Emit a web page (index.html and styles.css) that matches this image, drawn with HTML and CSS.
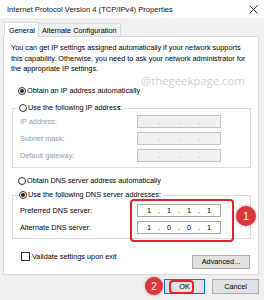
FILE: index.html
```html
<!DOCTYPE html>
<html>
<head>
<meta charset="utf-8">
<link rel="stylesheet" href="styles.css">
</head>
<body>
<div class="titlebar">
  <span class="title">Internet Protocol Version 4 (TCP/IPv4) Properties</span>
  <svg class="close" width="9" height="9" viewBox="0 0 9 9"><path d="M0.5 0.5L8.5 8.5M8.5 0.5L0.5 8.5" stroke="#222" stroke-width="0.9" fill="none"/></svg>
</div>
<div class="tabs">
  <div class="tab active">General</div>
  <div class="tab">Alternate Configuration</div>
</div>
<div class="panel">
  <p class="intro">You can get IP settings assigned automatically if your network supports this capability. Otherwise, you need to ask your network administrator for the appropriate IP settings.</p>
  <div class="watermark">@thegeekpage.com</div>
  <div class="radio-row first"><span class="radio checked"></span><span>Obtain an IP address automatically</span></div>
  <div class="group ip">
    <div class="legend"><span class="radio"></span><span>Use the following IP address:</span></div>
    <div class="field-row"><span class="label disabled">IP address:</span><div class="ipbox disabled"><i></i><i>.</i><i></i><i>.</i><i></i><i>.</i><i></i></div></div>
    <div class="field-row"><span class="label disabled">Subnet mask:</span><div class="ipbox disabled"><i></i><i>.</i><i></i><i>.</i><i></i><i>.</i><i></i></div></div>
    <div class="field-row"><span class="label disabled">Default gateway:</span><div class="ipbox disabled"><i></i><i>.</i><i></i><i>.</i><i></i><i>.</i><i></i></div></div>
  </div>
  <div class="radio-row dns-auto"><span class="radio"></span><span>Obtain DNS server address automatically</span></div>
  <div class="group dns">
    <div class="legend"><span class="radio checked"></span><span>Use the following DNS server addresses:</span></div>
    <div class="field-row"><span class="label">Preferred DNS server:</span><div class="ipbox"><i>1</i><i>.</i><i>1</i><i>.</i><i>1</i><i>.</i><i>1</i></div></div>
    <div class="field-row"><span class="label">Alternate DNS server:</span><div class="ipbox"><i>1</i><i>.</i><i>0</i><i>.</i><i>0</i><i>.</i><i>1</i></div></div>
    <div class="highlight dns-hl"></div>
    <div class="badge badge-1">1</div>
  </div>
  <div class="bottom-row">
    <div class="check-row"><span class="checkbox"></span><span>Validate settings upon exit</span></div>
    <div class="btn advanced">Advanced...</div>
  </div>
</div>
<div class="footer">
  <div class="btn ok">OK<div class="highlight ok-hl"></div><div class="badge badge-2">2</div></div>
  <div class="btn cancel">Cancel</div>
</div>
</body>
</html>
```
FILE: styles.css
```css
* { box-sizing: border-box; }
html, body { margin: 0; padding: 0; }
body {
  width: 264px;
  height: 300px;
  overflow: hidden;
  background: #f0f0f0;
  font-family: "Liberation Sans", Arial, sans-serif;
  font-size: 7.3px;
  color: #000;
}
.titlebar {
  height: 18px;
  background: #fff;
  display: flex;
  align-items: center;
  justify-content: space-between;
  padding: 0 6px 0 7px;
}
.title { font-size: 7.6px; color: #111; }
.close { display: block; }
.tabs {
  display: flex;
  align-items: flex-end;
  padding-left: 4px;
  height: 18px;
}
.tab {
  height: 13px;
  border: 1px solid #d9d9d9;
  border-bottom: none;
  background: #f0f0f0;
  padding: 0 3px;
  display: flex;
  align-items: center;
  margin-left: -1px;
}
.tab.active {
  height: 15px;
  background: #fff;
  margin-left: 0;
  padding: 0 3px 0 4px;
  position: relative;
  z-index: 1;
  margin-bottom: -1px;
}
.panel {
  position: relative;
  margin: 0 5px 0 3px;
  height: 239px;
  background: #fff;
  border: 1px solid #d9d9d9;
  padding: 6px 0 0 0;
}
.intro {
  margin: 0 0 0 7px;
  width: 236px;
  line-height: 10.5px;
}
.watermark {
  position: absolute;
  left: 137px;
  top: 36px;
  font-family: "Open Sans", sans-serif;
  font-size: 11.5px;
  color: #cfcfcf;
  letter-spacing: -0.1px;
}
.radio-row, .legend {
  display: flex;
  align-items: center;
  height: 12px;
}
.radio-row.first { margin: 10px 0 0 14px; }
.radio {
  width: 8px;
  height: 8px;
  border: 1px solid #333;
  border-radius: 50%;
  margin-right: 1px;
  display: flex;
  align-items: center;
  justify-content: center;
  flex: none;
}
.radio.checked::after {
  content: "";
  width: 4px;
  height: 4px;
  border-radius: 50%;
  background: #222;
}
.group {
  position: relative;
  margin: 0 7px 0 8px;
  border: 1px solid #dcdcdc;
  padding: 0 0 5px 7px;
}
.group.ip { margin-top: 11px; }
.legend {
  margin: -7px 0 0 -2px;
  background: #fff;
  width: fit-content;
  padding: 0 2px 0 1px;
}
.field-row {
  display: flex;
  align-items: center;
  height: 13px;
  margin-top: 4px;
}
.group .field-row:nth-of-type(2) { margin-top: 1px; }
.group.dns .field-row:nth-of-type(2) { margin-top: 3px; }
.label { width: 117px; flex: none; }
.label.disabled { color: #9a9a9a; }
.ipbox {
  width: 84px;
  height: 13px;
  border: 1px solid #a8a8a8;
  background: #fff;
  display: flex;
  align-items: center;
  padding-left: 6px;
}
.ipbox.disabled { background: #f0f0f0; border-color: #c4c4c4; color: #9a9a9a; }
.ipbox i {
  font-style: normal;
  width: 10px;
  text-align: center;
  line-height: 11px;
}
.radio-row.dns-auto { margin: 7px 0 0 14px; }
.group.dns { margin-top: 8px; padding-bottom: 4px; }
.highlight {
  position: absolute;
  border: 2px solid #e8202a;
  border-radius: 4px;
}
.dns-hl {
  left: 117px;
  top: 3px;
  width: 104px;
  height: 43px;
}
.badge {
  position: absolute;
  width: 20px;
  height: 20px;
  border-radius: 50%;
  background: #d9363e;
  color: #fff;
  font-size: 11px;
  display: flex;
  align-items: center;
  justify-content: center;
  box-shadow: 0 0 3px rgba(200,30,40,0.5);
}
.badge-1 { left: 223px; top: 10px; }
.bottom-row {
  display: flex;
  justify-content: space-between;
  align-items: flex-start;
  margin: 14px 8px 0 17px;
}
.check-row { display: flex; align-items: center; margin-top: -1px; }
.checkbox {
  width: 9px;
  height: 9px;
  border: 1px solid #333;
  background: #fff;
  margin-right: 2px;
}
.btn {
  height: 14px;
  border: 1px solid #adadad;
  background: #e1e1e1;
  display: flex;
  align-items: center;
  justify-content: center;
}
.advanced { width: 58px; margin-top: 2px; }
.footer {
  display: flex;
  justify-content: flex-end;
  gap: 7px;
  padding: 4px 5px 0 0;
}
.ok {
  position: relative;
  width: 41px;
  height: 15px;
  border-color: #0078d7;
}
.cancel { width: 47px; height: 15px; }
.ok-hl {
  left: 4px;
  top: 0px;
  width: 25px;
  height: 14px;
}
.badge-2 { left: -20px; top: -3px; width: 18px; height: 18px; font-size: 10px; }
```
